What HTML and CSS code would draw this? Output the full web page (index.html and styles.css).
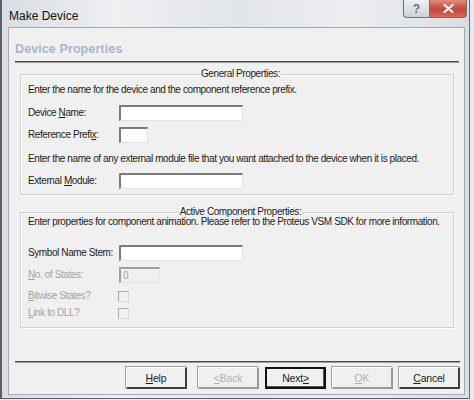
FILE: index.html
```html
<!DOCTYPE html>
<html>
<head>
<meta charset="utf-8">
<link rel="stylesheet" href="styles.css">
</head>
<body>
<div class="window">
  <div class="titlebar">
    <span class="title">Make Device</span>
    <div class="caption-btns">
      <div class="cap help"><span>?</span></div>
      <div class="cap close">
        <svg width="11" height="9" viewBox="0 0 11 9"><path d="M1.5 1 L9.5 8 M9.5 1 L1.5 8" stroke="#fff" stroke-width="2.2" stroke-linecap="round"/></svg>
      </div>
    </div>
  </div>
  <div class="client">
    <div class="header">
      <div class="heading">Device Properties</div>
      <div class="rule"></div>
    </div>
    <fieldset class="group g1">
      <legend>General Properties:</legend>
      <div class="note n1">Enter the name for the device and the component reference prefix.</div>
      <div class="row r-name"><label>Device <u>N</u>ame:</label><div class="input w-name"></div></div>
      <div class="row r-prefix"><label>Reference Prefi<u>x</u>:</label><div class="input w-prefix"></div></div>
      <div class="note n2">Enter the name of any external module file that you want attached to the device when it is placed.</div>
      <div class="row r-ext"><label>External <u>M</u>odule:</label><div class="input w-name"></div></div>
    </fieldset>
    <fieldset class="group g2">
      <legend>Active Component Properties:</legend>
      <div class="note n3">Enter properties for component animation. Please refer to the Proteus VSM SDK for more information.</div>
      <div class="row r-stem"><label>Symbol Name Stem:</label><div class="input w-name"></div></div>
      <div class="row r-states dis"><label><u>N</u>o. of States:</label><div class="input w-states disabled">0</div></div>
      <div class="row r-bit dis"><label><u>B</u>itwise States?</label><div class="check"></div></div>
      <div class="row r-dll dis"><label><u>L</u>ink to DLL?</label><div class="check"></div></div>
    </fieldset>
    <div class="spacer"></div>
    <div class="footer">
      <div class="rule"></div>
      <div class="buttons">
        <div class="btn first"><u>H</u>elp</div>
        <div class="btn disabled"><u>&lt;</u>Back</div>
        <div class="btn default">Next<u>&gt;</u></div>
        <div class="btn disabled"><u>O</u>K</div>
        <div class="btn"><u>C</u>ancel</div>
      </div>
    </div>
  </div>
</div>
</body>
</html>
```
FILE: styles.css
```css
html, body {
  margin: 0;
  padding: 0;
  width: 474px;
  height: 400px;
  overflow: hidden;
  background: #e8ebee;
}
.window {
  width: 470px;
  height: 399px;
  box-sizing: border-box;
  border-left: 2px solid #5c5f63;
  border-right: 1px solid #6a6d70;
  border-bottom: 1px solid #5c5f63;
  background: linear-gradient(90deg, #d9dde2 0%, #eef0f2 25%, #e2e5e9 50%, #eceef0 75%, #dadee3 100%);
  display: flex;
  flex-direction: column;
  font-family: "Liberation Sans", Arial, sans-serif;
  color: #1c1c1c;
}
.titlebar {
  height: 27px;
  flex: none;
  display: flex;
  align-items: flex-start;
  justify-content: space-between;
  padding-left: 7px;
}
.title {
  font-size: 12px;
  line-height: 12px;
  margin-top: 10px;
  color: #111;
}
.caption-btns {
  display: flex;
  margin-right: 2px;
}
.cap {
  height: 18px;
  box-sizing: border-box;
  border: 1px solid #6f7277;
  border-top: none;
  display: flex;
  align-items: center;
  justify-content: center;
}
.help {
  width: 26px;
  border-right: none;
  border-radius: 0 0 0 4px;
  background: linear-gradient(#eef0f2, #cfd3d8);
  font-size: 12px;
  font-weight: bold;
  color: #6a6f78;
}
.close {
  width: 38px;
  border-radius: 0 0 4px 0;
  background: linear-gradient(#e58a80, #c5463a 55%, #d7685a);
}
.client {
  margin: 0 4px 3px 6px;
  flex: 1;
  border: 1px solid #a3aab3;
  background: #f0f0f0;
  display: flex;
  flex-direction: column;
  font-size: 10px;
  letter-spacing: -0.4px;
}
.header {
  padding: 12px 5px 0 6px;
}
.heading {
  font-size: 12.5px;
  font-weight: bold;
  color: #a9b6c8;
  line-height: 18px;
  padding-left: 0;
  letter-spacing: 0.1px;
}
.rule {
  border-top: 1px solid #4a4a4a;
  border-bottom: 1px solid #a0a0a0;
  margin-top: 3px;
}
.group {
  margin: 0 10px 0 11px;
  border: 1px solid #d0d0d0;
  box-shadow: inset 1px 1px 0 #fff, 1px 1px 0 #fff;
  padding: 0 0 0 7px;
  min-width: 0;
}
.g1 { margin-top: 5px; padding-bottom: 5px; }
.g2 { margin-top: 11px; padding-bottom: 8px; }
legend {
  margin: 0 auto;
  padding: 0 1px;
  font-size: 10px;
  line-height: 12px;
}
.note {
  line-height: 12px;
  white-space: nowrap;
}
.n1 { margin-top: 4px; }
.n2 { margin-top: 10px; }
.n3 { margin-top: -2px; }
.row {
  display: flex;
  align-items: center;
  white-space: nowrap;
  line-height: 12px;
}
.row label {
  width: 91px;
  flex: none;
}
.r-name { margin-top: 9px; }
.r-prefix { margin-top: 6px; }
.r-ext { margin-top: 8px; }
.r-stem { margin-top: 17px; }
.r-states { margin-top: 6px; }
.r-bit { margin-top: 7px; }
.r-dll { margin-top: 5px; }
.input {
  height: 16px;
  box-sizing: border-box;
  background: #fff;
  border-top: 2px solid #7b7b7b;
  border-left: 2px solid #7b7b7b;
  border-right: 1px solid #e3e3e3;
  border-bottom: 1px solid #e3e3e3;
  line-height: 13px;
  padding-left: 2px;
}
.w-name { width: 124px; }
.w-prefix { width: 29px; }
.w-states { width: 41px; }
.input.disabled {
  background: #f0f0f0;
  border-top-color: #9e9e9e;
  border-left-color: #9e9e9e;
  color: #a0a0a0;
}
.dis { color: #a3a3a3; }
.check {
  width: 11px;
  height: 11px;
  box-sizing: border-box;
  border-top: 1px solid #a9a9a9;
  border-left: 1px solid #a9a9a9;
  border-right: 1px solid #dadada;
  border-bottom: 1px solid #dadada;
  margin-left: -1px;
}
.spacer { flex: 1; }
.footer {
  padding: 0 4px 5px 6px;
}
.footer .rule { margin-top: 0; }
.buttons {
  display: flex;
  justify-content: flex-end;
  gap: 6px;
  margin-top: 4px;
}
.btn {
  width: 61px;
  height: 22px;
  box-sizing: border-box;
  border-top: 1px solid #fff;
  border-left: 1px solid #fff;
  border-right: 2px solid #3e3e3e;
  border-bottom: 2px solid #3e3e3e;
  box-shadow: -1px -1px 0 #a0a0a0;
  display: flex;
  align-items: center;
  justify-content: center;
  font-size: 10.5px;
  letter-spacing: -0.2px;
  color: #1c1c1c;
}
.btn.first { margin-right: 5px; }
.btn.disabled {
  color: #b0b0b0;
  border-right-color: #9a9a9a;
  border-bottom-color: #9a9a9a;
}
.btn.default {
  border: 2px solid #111;
  box-shadow: inset -1px -1px 0 #555;
}
```
